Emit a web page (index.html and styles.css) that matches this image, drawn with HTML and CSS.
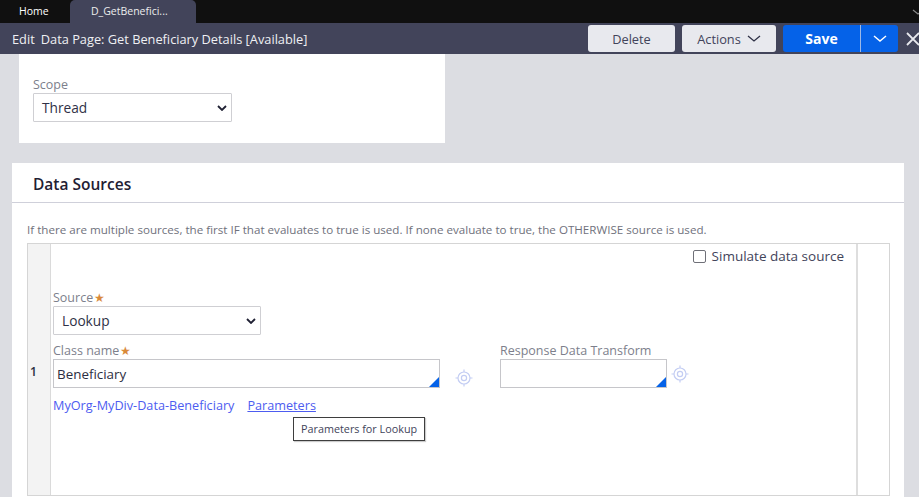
FILE: index.html
```html
<!DOCTYPE html>
<html lang="en">
<head>
<meta charset="utf-8">
<title>Edit Data Page</title>
<link rel="stylesheet" href="styles.css">
</head>
<body>
<div class="tabbar">
  <div class="tab-home">Home</div>
  <div class="tab-active">D_GetBenefici...</div>
  <svg class="tabbar-chevron" width="12" height="6" viewBox="0 0 12 6"><path d="M1 1l5 4 5-4" fill="none" stroke="#8a8a8a" stroke-width="1.2"/></svg>
</div>
<header class="titlebar">
  <div class="title"><span>Edit</span><span>Data Page: Get Beneficiary Details [Available]</span></div>
  <div class="actions">
    <button class="btn btn-delete">Delete</button>
    <button class="btn btn-actions">Actions
      <svg width="14" height="7" viewBox="0 0 14 7"><path d="M1 1l6 5 6-5" fill="none" stroke="#2f3146" stroke-width="1.3"/></svg>
    </button>
    <div class="save-group">
      <button class="save">Save</button>
      <button class="save-menu" aria-label="Save options"><svg width="14" height="7" viewBox="0 0 14 7"><path d="M1 1l6 5 6-5" fill="none" stroke="#fff" stroke-width="1.5"/></svg></button>
    </div>
    <svg class="close" width="14" height="14" viewBox="0 0 14 14"><path d="M1 1l12 12M13 1L1 13" fill="none" stroke="#e8e9ee" stroke-width="1.8"/></svg>
  </div>
</header>
<main class="content">
  <section class="card-scope">
    <label class="field-label">Scope</label>
    <div class="select select-scope"><span>Thread</span><svg width="10" height="6" viewBox="0 0 10 6"><path d="M1 1l4 4 4-4" fill="none" stroke="#1f2033" stroke-width="1.8"/></svg></div>
  </section>
  <section class="card-sources">
    <h2 class="sources-title">Data Sources</h2>
    <div class="sources-body">
      <p class="hint">If there are multiple sources, the first IF that evaluates to true is used. If none evaluate to true, the OTHERWISE source is used.</p>
      <div class="grid">
        <div class="row-num"><span>1</span></div>
        <div class="row-main">
          <div class="simulate"><span class="checkbox"></span><span>Simulate data source</span></div>
          <div class="source-field">
            <label class="field-label">Source<span class="req">★</span></label>
            <div class="select select-source"><span>Lookup</span><svg width="10" height="6" viewBox="0 0 10 6"><path d="M1 1l4 4 4-4" fill="none" stroke="#1f2033" stroke-width="1.8"/></svg></div>
          </div>
          <div class="class-row">
            <div class="class-col">
              <label class="field-label">Class name<span class="req">★</span></label>
              <div class="picker">
                <div class="input input-class">Beneficiary</div>
                <svg class="target target-class" width="18" height="18" viewBox="0 0 18 18"><g fill="none" stroke="#c3cdf3" stroke-width="1.2"><circle cx="9" cy="9" r="6"/><circle cx="9" cy="9" r="2.6"/><path d="M9 0.5v2.5M9 15v2.5M0.5 9H3M15 9h2.5"/></g></svg>
              </div>
            </div>
            <div class="transform-col">
              <label class="field-label">Response Data Transform</label>
              <div class="picker">
                <div class="input input-transform"></div>
                <svg class="target" width="18" height="18" viewBox="0 0 18 18"><g fill="none" stroke="#c3cdf3" stroke-width="1.2"><circle cx="9" cy="9" r="6"/><circle cx="9" cy="9" r="2.6"/><path d="M9 0.5v2.5M9 15v2.5M0.5 9H3M15 9h2.5"/></g></svg>
              </div>
            </div>
          </div>
          <div class="links">
            <a class="class-link">MyOrg-MyDiv-Data-Beneficiary</a>
            <a class="param-link">Parameters</a>
            <div class="tooltip">Parameters for Lookup</div>
          </div>
        </div>
        <div class="row-end"></div>
      </div>
    </div>
  </section>
</main>
</body>
</html>
```
FILE: styles.css
```css
* { box-sizing: border-box; }
html, body { margin: 0; height: 100%; overflow: hidden; }
body { background: #dcdde2; font-family: "Open Sans", "Noto Sans", sans-serif; color: #2c2e42; width: 919px; height: 497px; }

.tabbar { height: 23px; background: #101010; display: flex; position: relative; color: #fff; font-size: 10.5px; }
.tab-home { width: 70px; padding: 4px 0 0 19px; }
.tab-active { width: 126px; background: #42445a; border-radius: 5px 5px 0 0; padding: 4px 0 0 21px; color: #eceded; }
.tabbar-chevron { position: absolute; right: -5px; top: 9px; }

.titlebar { height: 31px; background: #42445a; display: flex; justify-content: space-between; padding: 2px 0 0 12px; position: relative; z-index: 1; }
.title { display: flex; gap: 6px; color: #eff0f3; font-size: 12.8px; line-height: 29px; }
.actions { display: flex; align-items: flex-start; margin-right: -1px; }
.btn { height: 27px; border: 0; border-radius: 3px; background: #e8e9ee; color: #42445a; font: 12.8px "Open Sans", sans-serif; padding: 0; }
.btn-delete { width: 87px; margin-right: 7px; }
.btn-actions { width: 94px; margin-right: 7px; display: flex; align-items: center; justify-content: center; gap: 6px; }
.save-group { display: flex; width: 115px; height: 27px; background: #0562e8; border-radius: 3px; margin-right: 8px; }
.save { width: 78px; border: 0; border-right: 1px solid #9db9e6; background: none; color: #fff; font: 700 14px "Open Sans", sans-serif; padding: 0; }
.save-menu { flex: 1; border: 0; background: none; padding: 0; display: flex; align-items: center; justify-content: center; }
.close { margin-top: 7px; flex-shrink: 0; }

.content { padding: 0 15px 0 12px; }
.card-scope { width: 426px; height: 89px; margin-left: 7px; background: #fff; padding: 23px 14px 0; }
.field-label { display: block; font-size: 12.5px; line-height: 16px; color: #7d7f8c; white-space: nowrap; }
.req { color: #d98a3a; font-size: 12px; margin-left: 1px; }
.select { border: 1px solid #cfcfd3; background: #fff; display: flex; align-items: center; justify-content: space-between; color: #2f3146; font-size: 13.7px; border-radius: 1px; }
.select-scope { width: 199px; height: 29px; padding: 0 4px 0 8px; }
.select-source { width: 208px; height: 29px; padding: 0 4px 0 8px; }

.card-sources { margin-top: 20px; width: 892px; height: 334px; background: #fff; }
.sources-title { margin: 0; height: 40px; border-bottom: 1px solid #cfd0da; padding: 11px 0 0 21px; font-size: 15.5px; line-height: 20px; font-weight: 600; color: #1f2033; }
.sources-body { padding: 19px 14px 0 15px; }
.hint { margin: 0 0 6px; font-size: 11.62px; line-height: 15px; color: #6f717c; white-space: nowrap; }
.grid { display: grid; grid-template-columns: 23px 805px 33px; height: 253px; border: 1px solid #d5d5d5; }
.row-num { background: #f3f3f3; border-right: 1px solid #dadada; display: flex; align-items: flex-start; padding: 119px 0 0 2px; font-size: 12.2px; font-weight: 600; color: #2c2e42; }
.row-main { padding: 3px 0 0 2px; }
.row-end { border-left: 2px solid #dedede; }

.simulate { display: flex; justify-content: flex-end; align-items: center; gap: 6px; height: 18px; padding-right: 12px; font-size: 13.5px; color: #42445a; }
.checkbox { width: 13px; height: 13px; border: 1px solid #6f7078; border-radius: 2px; background: #fff; }
.source-field { margin-top: 25px; }
.class-row { display: flex; margin-top: 8px; }
.class-col { width: 447px; }
.picker { display: flex; }
.input { position: relative; height: 29px; border: 1px solid #c6c6ca; background: #fff; font-size: 13.4px; line-height: 28px; padding-left: 3px; color: #2c2e42; }
.input::after { content: ""; position: absolute; right: 0; bottom: 0; border-style: solid; border-width: 0 0 10px 10px; border-color: transparent transparent #0562e8 transparent; }
.input-class { width: 387px; }
.input-transform { width: 167px; }
.target { margin: 6px 0 0 4px; }
.target-class { margin: 10px 0 0 15px; }
.links { position: relative; margin-top: 9px; font-size: 12.66px; line-height: 16px; display: flex; gap: 13px; color: #4d5cf0; }
.param-link { text-decoration: underline; }
.tooltip { position: absolute; left: 240px; top: 20px; width: 132px; height: 24px; border: 1px solid #3e3e3e; background: #fff; color: #42445a; font-size: 10.8px; line-height: 21px; padding-left: 7px; box-shadow: 1px 1px 1px rgba(0,0,0,.2); white-space: nowrap; }
```
